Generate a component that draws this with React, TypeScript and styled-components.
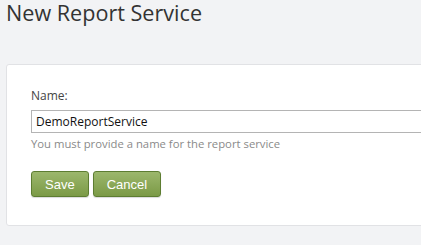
import styled, { createGlobalStyle } from "styled-components";

const GlobalStyle = createGlobalStyle`
  body {
    margin: 0;
    background-color: #f2f3f5;
    font-family: "Open Sans", "Noto Sans", sans-serif;
    overflow: hidden;
  }
`;

export default function App() {
  return (
    <>
      <GlobalStyle />
      <Page>
        <Title>New Report Service</Title>
        <Card>
          <Label htmlFor="name">Name:</Label>
          <Input id="name" defaultValue="DemoReportService" />
          <Hint>You must provide a name for the report service</Hint>
          <Actions>
            <Button>Save</Button>
            <Button>Cancel</Button>
          </Actions>
        </Card>
      </Page>
    </>
  );
}

const Page = styled.div`
  width: 440px;
  padding-left: 6px;
`;

const Title = styled.h1`
  margin: 0;
  font-weight: normal;
  font-size: 21.6px;
  line-height: 28px;
  margin-top: -1px;
  color: #333;
`;

const Card = styled.section`
  margin-top: 37px;
  height: 162px;
  box-sizing: border-box;
  background-color: #fff;
  border: 1px solid #e1e2e5;
  border-radius: 3px;
  padding: 22px 0 0 24px;
  display: flex;
  flex-direction: column;
`;

const Label = styled.label`
  font-size: 12px;
  line-height: 18px;
  color: #444;
  margin-bottom: 5px;
`;

const Input = styled.input`
  box-sizing: border-box;
  height: 23px;
  border: 1px solid #b4b4b4;
  padding: 0 4px;
  font-family: "Open Sans", "Noto Sans", sans-serif;
  font-size: 12px;
  color: #111;
  outline: none;
`;

const Hint = styled.div`
  font-size: 11.3px;
  line-height: 16px;
  margin-top: 3px;
  color: #8a8a8a;
`;

const Actions = styled.div`
  display: flex;
  gap: 4px;
  margin-top: 19px;
`;

const Button = styled.button`
  height: 26px;
  padding: 0 13px;
  border: 1px solid #5d7d31;
  border-radius: 3px;
  background: linear-gradient(#9cb76c, #7b9a46);
  color: #fff;
  font-family: "Liberation Sans", Arial, sans-serif;
  font-size: 13px;
  box-shadow: 0 1px 1px rgba(0, 0, 0, 0.15);
`;
